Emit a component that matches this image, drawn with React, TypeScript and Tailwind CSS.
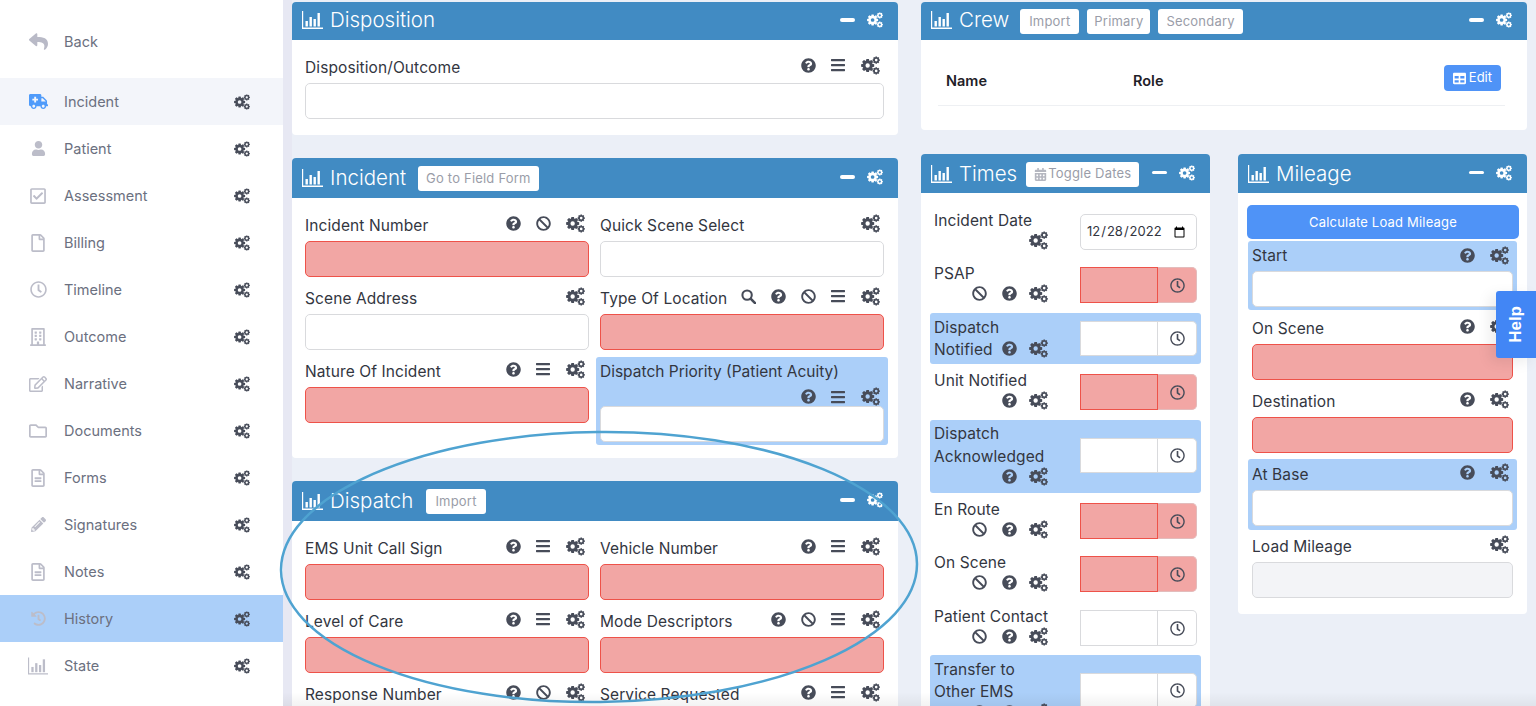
import React from 'react'
import {
  FaAmbulance, FaBan, FaBars, FaCalendarAlt, FaHistory, FaPencilAlt, FaQuestionCircle,
  FaRegBuilding, FaRegCheckSquare, FaRegClock, FaRegEdit, FaRegFile, FaRegFileAlt, FaRegFolder,
  FaReply, FaTable, FaUser,
} from 'react-icons/fa'

type IconName = 'help' | 'ban' | 'bars' | 'search'

// gear outline, computed so the big and small cogs share one shape
function gear(cx: number, cy: number, outer: number, inner: number, hole: number, teeth: number) {
  let d = ''
  const step = (Math.PI * 2) / teeth
  for (let i = 0; i < teeth; i++) {
    const a = i * step
    const pts: [number, number][] = [
      [inner, a - step * 0.5],
      [outer, a - step * 0.24],
      [outer, a + step * 0.24],
      [inner, a + step * 0.5],
    ]
    pts.forEach(([r, t], j) => {
      d += `${i === 0 && j === 0 ? 'M' : 'L'}${(cx + r * Math.cos(t)).toFixed(2)} ${(cy + r * Math.sin(t)).toFixed(2)}`
    })
  }
  d += `Z M${cx + hole} ${cy}a${hole} ${hole} 0 1 0 ${-hole * 2} 0a${hole} ${hole} 0 1 0 ${hole * 2} 0Z`
  return d
}

const COGS_PATH = gear(7, 10, 7, 5, 2.3, 8) + gear(16, 4.3, 3.9, 2.9, 1.4, 8) + gear(16, 15.7, 3.9, 2.9, 1.4, 8)

function Cogs({ size }: { size: number }) {
  return (
    <svg viewBox="0 0 20 20" width={size} height={size} fill="currentColor" fillRule="evenodd" className="shrink-0">
      <path d={COGS_PATH} />
    </svg>
  )
}

function ChartIcon({ className }: { className?: string }) {
  return (
    <svg viewBox="0 0 21 18" className={className} fill="currentColor">
      <path d="M0 0h1.2v16.6H21V18H0z" />
      <rect x="3.5" y="10" width="2.4" height="5.5" />
      <rect x="7.5" y="6" width="2.4" height="9.5" />
      <rect x="11.5" y="8" width="2.4" height="7.5" />
      <rect x="15.5" y="2" width="2.4" height="13.5" />
    </svg>
  )
}

const NAV: { label: string; icon: React.ReactNode; cls?: string }[] = [
  { label: 'Incident', icon: <FaAmbulance size={19} className="text-[#4f9bfa]" />, cls: 'bg-[#f3f5fa] text-[#4f9bfa]' },
  { label: 'Patient', icon: <FaUser size={15} /> },
  { label: 'Assessment', icon: <FaRegCheckSquare size={18} /> },
  { label: 'Billing', icon: <FaRegFile size={18} /> },
  { label: 'Timeline', icon: <FaRegClock size={17} /> },
  { label: 'Outcome', icon: <FaRegBuilding size={18} /> },
  { label: 'Narrative', icon: <FaRegEdit size={18} /> },
  { label: 'Documents', icon: <FaRegFolder size={18} /> },
  { label: 'Forms', icon: <FaRegFileAlt size={18} /> },
  { label: 'Signatures', icon: <FaPencilAlt size={15} /> },
  { label: 'Notes', icon: <FaRegFileAlt size={18} /> },
  { label: 'History', icon: <FaHistory size={15} />, cls: 'bg-[#abcff9]' },
  { label: 'State', icon: <ChartIcon className="w-[21px] h-[18px]" /> },
]

function SearchGlyph() {
  return (
    <svg viewBox="0 0 16 16" className="w-[15px] h-[15px]" fill="none" stroke="currentColor">
      <circle cx="6.5" cy="6.5" r="5" strokeWidth="2.2" />
      <path d="M10.5 10.5 15 15" strokeWidth="2.8" strokeLinecap="round" />
    </svg>
  )
}

function Icons({ names, compact }: { names: IconName[]; compact?: boolean }) {
  return (
    <div className="flex items-center justify-end text-[#474c59] shrink-0">
      {names.map(n => (
        <span key={n} className="w-[30px] flex justify-center">
          {n === 'help' && <FaQuestionCircle size={15} />}
          {n === 'ban' && <FaBan size={15} />}
          {n === 'bars' && <FaBars size={16} />}
          {n === 'search' && <SearchGlyph />}
        </span>
      ))}
      <span className={`w-[28px] flex justify-center ${compact ? '' : 'ml-[3px]'}`}>
        <Cogs size={19} />
      </span>
    </div>
  )
}

function Input({ kind }: { kind?: 'red' | 'gray' }) {
  const cls = kind === 'red'
    ? 'bg-[#f2a6a4] border-[#ee5249]'
    : kind === 'gray'
      ? 'bg-[#f3f4f7] border-[#d9dadd]'
      : 'bg-white border-[#d9dadd]'
  return <div className={`h-[36px] rounded-[5px] border ${cls}`} />
}

function Field({ label, icons, kind }: { label: string; icons: IconName[]; kind?: 'red' | 'gray' }) {
  return (
    <div className="mb-[10px]">
      <div className="flex items-center justify-between h-[27px] pb-[3px]">
        <span className="text-[15.5px] tracking-[0.1px] text-[#33363f] whitespace-nowrap">{label}</span>
        <div className="-translate-y-[3px]"><Icons names={icons} /></div>
      </div>
      <Input kind={kind} />
    </div>
  )
}

function Panel({ title, buttons, h = 40, btnCls = 'ml-[11px]', children }: { title: string; buttons?: string[]; h?: number; btnCls?: string; children: React.ReactNode }) {
  return (
    <div className="bg-white rounded-[4px] overflow-hidden shrink-0">
      <div
        className={`bg-[#418bc3] text-white flex items-center pl-[10px] pr-[15px] ${h === 38 ? 'h-[38px]' : h === 39 ? 'h-[39px]' : 'h-[40px]'}`}
      >
        <ChartIcon className={`w-[21px] h-[18px] shrink-0 ${h === 38 ? '-mt-[2px]' : ''}`} />
        <span className={`ml-[7px] text-[20.5px] font-light leading-none ${h === 38 ? '-mt-[2px]' : h === 39 ? 'mt-[2px]' : ''}`}>{title}</span>
        <div className={`flex gap-[8px] mt-[1px] ${btnCls}`}>
          {buttons?.map(b => (
            <span
              key={b}
              className={`h-[25px] flex items-center gap-[1px] bg-white rounded-[3px] text-[13px] tracking-[0.2px] text-[#9a9da8] whitespace-nowrap ${b === 'Import' ? 'px-[9px]' : b === 'Primary' ? 'px-[7px]' : 'px-[8px]'}`}
            >
              {b === 'Toggle Dates' && <FaCalendarAlt size={13} className="text-[#b5b7c0]" />}
              {b}
            </span>
          ))}
        </div>
        <div className="ml-auto flex items-center -mt-[2px]">
          <span className="w-[15px] h-[3.5px] bg-white rounded-full" />
          <span className="ml-[12px]"><Cogs size={16} /></span>
        </div>
      </div>
      {children}
    </div>
  )
}

function TimeBox({ red, tall }: { red?: boolean; tall?: boolean }) {
  return (
    <div className={`flex w-[117px] shrink-0 ${tall ? 'h-[35px]' : 'h-[36px]'}`}>
      <div className={`w-[78px] border ${red ? 'bg-[#f2a6a4] border-[#ee5249]' : 'bg-white border-[#d9dadd]'}`} />
      <div className={`flex-1 flex items-center justify-center rounded-r-[5px] border border-l-0 text-[#474c59] ${red ? 'bg-[#f2a6a4] border-[#e3bcbc]' : 'bg-white border-[#d9dadd]'}`}>
        <FaRegClock size={15} />
      </div>
    </div>
  )
}

function TimeRow({ label, icons, red, mb = 'mb-[10px]' }: { label: string; icons: IconName[]; red?: boolean; mb?: string }) {
  return (
    <div className={`flex justify-between h-[43px] ${mb}`}>
      <div className="w-[118px]">
        <div className="h-[22px] leading-[22px] translate-y-[1px] text-[15.5px] tracking-[0.1px] text-[#33363f] whitespace-nowrap">{label}</div>
        <div className="h-[21px] flex justify-end -translate-y-[1px]"><Icons names={icons} compact /></div>
      </div>
      <div className="mt-[5px]"><TimeBox red={red} /></div>
    </div>
  )
}

export default function App() {
  return (
    <div className="relative w-[1536px] h-[706px] overflow-hidden flex bg-[#ebeff7] font-['Inter',sans-serif]">
      {/* sidebar */}
      <aside className="w-[283px] shrink-0 bg-white pt-[18px]">
        <div className="h-[47px] mb-[13px] flex items-center pl-[28px] text-[14.5px] text-[#6b7080]">
          <span className="w-[20px] flex justify-center text-[#b9bac7]"><FaReply size={19} /></span>
          <span className="ml-[16px]">Back</span>
        </div>
        {NAV.map(item => (
          <div key={item.label} className={`h-[47px] flex items-center pl-[28px] pr-[33px] text-[14.5px] text-[#6b7080] ${item.cls ?? ''}`}>
            <span className="w-[20px] flex justify-center text-[#bcbdc9]">{item.icon}</span>
            <span className="ml-[16px]">{item.label}</span>
            <span className="ml-auto text-[#474c59]"><Cogs size={16} /></span>
          </div>
        ))}
      </aside>
      <div className="w-[9px] shrink-0 bg-[#e7e8f3]" />

      {/* left column */}
      <div className="w-[606px] shrink-0 pt-[2px] flex flex-col gap-[23px]">
        <Panel title="Disposition" h={38}>
          <div className="pt-[16px] pl-[13px] pr-[14px] pb-[6px]">
            <Field label="Disposition/Outcome" icons={['help', 'bars']} />
          </div>
        </Panel>
        <Panel title="Incident" buttons={['Go to Field Form']} btnCls="ml-[12px]">
          <div className="pt-[16px] pl-[13px] pr-[14px] pb-[13px] grid grid-cols-2 gap-x-[11px] items-start">
            <Field label="Incident Number" icons={['help', 'ban']} kind="red" />
            <Field label="Quick Scene Select" icons={[]} />
            <Field label="Scene Address" icons={[]} />
            <Field label="Type Of Location" icons={['search', 'help', 'ban', 'bars']} kind="red" />
            <Field label="Nature Of Incident" icons={['help', 'bars']} kind="red" />
            <div className="bg-[#abcff9] rounded-[3px] -mx-[4px] px-[4px] -mt-[3px] pt-[3px] pb-[3px]">
              <div className="h-[27px] pb-[3px] flex items-center text-[15.5px] text-[#33363f] whitespace-nowrap">Dispatch Priority (Patient Acuity)</div>
              <div className="h-[19px] flex justify-end items-center"><Icons names={['help', 'bars']} /></div>
              <Input />
            </div>
          </div>
        </Panel>
        <Panel title="Dispatch" buttons={['Import']} btnCls="ml-[13px]">
          <div className="pt-[16px] pl-[13px] pr-[14px] grid grid-cols-2 gap-x-[11px] items-start">
            <Field label="EMS Unit Call Sign" icons={['help', 'bars']} kind="red" />
            <Field label="Vehicle Number" icons={['help', 'bars']} kind="red" />
            <Field label="Level of Care" icons={['help', 'bars']} kind="red" />
            <Field label="Mode Descriptors" icons={['help', 'ban', 'bars']} kind="red" />
            <Field label="Response Number" icons={['help', 'ban']} />
            <Field label="Service Requested" icons={['help', 'bars']} />
          </div>
        </Panel>
      </div>

      {/* right column */}
      <div className="w-[606px] shrink-0 ml-[23px] pt-[2px] flex flex-col gap-[24px]">
        <Panel title="Crew" buttons={['Import', 'Primary', 'Secondary']} h={38}>
          <div className="h-[90px] pl-[17px] pr-[22px] pt-[25px]">
            <div className="h-[41px] border-b border-[#eef0f3] flex items-start pl-[8px] pr-[4px] text-[14.5px] font-semibold text-[#1f2128]">
              <span className="w-[187px] mt-[5px]">Name</span>
              <span className="mt-[5px]">Role</span>
              <span className="ml-auto h-[26px] px-[9px] flex items-center gap-[3px] rounded-[4px] bg-[#4f93f7] text-white text-[13px] font-normal">
                <FaTable size={13} />Edit
              </span>
            </div>
          </div>
        </Panel>
        <div className="flex gap-[28px] items-start shrink-0">
          <div className="w-[289px]">
            <Panel title="Times" buttons={['Toggle Dates']} h={39} btnCls="ml-[9px]">
              <div className="px-[13px] pt-[16px]">
                <div className="flex justify-between mb-[10px] h-[43px]">
                  <div className="w-[118px]">
                    <div className="h-[22px] leading-[22px] translate-y-[1px] text-[15.5px] tracking-[0.1px] text-[#33363f] whitespace-nowrap">Incident Date</div>
                    <div className="h-[21px] flex justify-end -translate-y-[1px]"><Icons names={[]} compact /></div>
                  </div>
                  <input
                    type="date"
                    defaultValue="2022-12-28"
                    className="mt-[5px] w-[117px] h-[36px] shrink-0 rounded-[5px] border border-[#d9dadd] bg-white pl-[5px] pr-[8px] text-[13px] text-[#33363f]"
                  />
                </div>
                <TimeRow label="PSAP" icons={['ban', 'help']} red />
                <div className="-mx-[4px] px-[4px] -mt-[2px] mb-[5px] pt-[3px] pb-[4px] bg-[#abcff9] rounded-[3px] flex justify-between items-center">
                  <div className="w-[118px] text-[15.5px] leading-[22px] tracking-[0.1px] text-[#33363f]">
                    <div className="translate-y-[1px]">Dispatch</div>
                    <div className="flex justify-between items-center">
                      <span className="translate-y-[1px]">Notified</span>
                      <div className="-translate-y-[1px]"><Icons names={['help']} compact /></div>
                    </div>
                  </div>
                  <TimeBox tall />
                </div>
                <TimeRow label="Unit Notified" icons={['help']} red />
                <div className="-mx-[4px] px-[4px] -mt-[2px] mb-[5px] pt-[3px] pb-[5px] bg-[#abcff9] rounded-[3px] flex justify-between items-center">
                  <div className="w-[118px] text-[15.5px] leading-[22px] tracking-[0.1px] text-[#33363f]">
                    <div>Dispatch</div>
                    <div className="translate-y-[1px]">Acknowledged</div>
                    <div className="h-[21px] flex justify-end -translate-y-[1px]"><Icons names={['help']} compact /></div>
                  </div>
                  <TimeBox tall />
                </div>
                <TimeRow label="En Route" icons={['ban', 'help']} red />
                <TimeRow label="On Scene" icons={['ban', 'help']} red mb="mb-[11px]" />
                <TimeRow label="Patient Contact" icons={['ban', 'help']} />
                <div className="-mx-[4px] px-[4px] -mt-[3px] pt-[3px] pb-[7px] bg-[#abcff9] rounded-[3px] flex justify-between items-center">
                  <div className="w-[118px] text-[15.5px] leading-[22px] tracking-[0.1px] text-[#33363f]">
                    <div className="translate-y-[1px]">Transfer to</div>
                    <div className="translate-y-[1px]">Other EMS</div>
                    <div className="h-[21px] flex justify-end"><Icons names={['ban', 'help']} compact /></div>
                  </div>
                  <TimeBox tall />
                </div>
              </div>
            </Panel>
          </div>
          <div className="w-[289px]">
            <Panel title="Mileage" h={39}>
              <div className="px-[14px] pt-[12px] pb-[6px]">
                <div className="-ml-[5px] -mr-[6px] h-[34px] mb-[2px] rounded-[5px] bg-[#4f93f7] text-white text-[13px] tracking-[0.2px] flex items-center justify-center">
                  <span className="translate-y-[1px]">Calculate Load Mileage</span>
                </div>
                <div className="-mx-[4px] px-[4px] pb-[3px] mb-[7px] bg-[#abcff9] rounded-[3px]">
                  <div className="flex items-center justify-between h-[30px]">
                    <span className="text-[15.5px] tracking-[0.1px] text-[#33363f]">Start</span>
                    <div className="-translate-y-[1px]"><Icons names={['help']} /></div>
                  </div>
                  <Input />
                </div>
                <Field label="On Scene" icons={['help']} kind="red" />
                <Field label="Destination" icons={['help']} kind="red" />
                <div className="-mx-[4px] px-[4px] -mt-[4px] pt-[4px] pb-[4px] mb-[5px] bg-[#abcff9] rounded-[3px]">
                  <div className="flex items-center justify-between h-[27px] pb-[3px]">
                    <span className="text-[15.5px] tracking-[0.1px] text-[#33363f]">At Base</span>
                    <div className="-translate-y-[3px]"><Icons names={['help']} /></div>
                  </div>
                  <Input />
                </div>
                <Field label="Load Mileage" icons={[]} kind="gray" />
              </div>
            </Panel>
          </div>
        </div>
      </div>

      {/* help tab */}
      <div className="absolute right-0 top-[291px] w-[40px] h-[67px] rounded-l-[3px] bg-[#4286f5] shadow-[-6px_4px_14px_rgba(0,0,0,0.08)] flex items-center justify-center">
        <span className="[writing-mode:vertical-rl] rotate-180 text-white font-bold text-[17px] font-['Liberation_Sans',sans-serif]">Help</span>
      </div>

      {/* hand drawn annotation */}
      <svg className="absolute inset-0 pointer-events-none" width="1536" height="706" fill="none">
        <ellipse cx="599" cy="567" rx="318" ry="135" stroke="#4fa3d1" strokeWidth="2.5" transform="rotate(-0.6 599 567)" />
      </svg>

      <div className="absolute left-[283px] right-0 bottom-0 h-[14px] bg-gradient-to-b from-transparent to-black/5 pointer-events-none" />
    </div>
  )
}
